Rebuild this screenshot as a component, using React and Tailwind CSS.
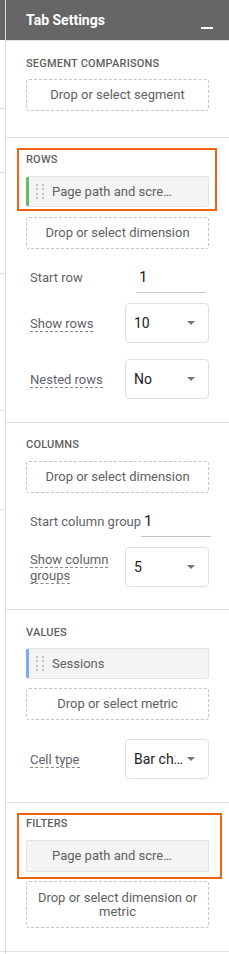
import React from 'react';

const font = "font-['Roboto','Liberation_Sans',sans-serif]";

function Label({ children }) {
  return (
    <div className="h-4 text-[11px] leading-4 font-medium tracking-[0.2px] text-[#5f5f5f] uppercase">
      {children}
    </div>
  );
}

function DropBox({ children, className = '' }) {
  return (
    <div className={`h-[32px] border border-dashed border-[#c4c4c4] rounded-[3px] flex items-center justify-center text-[13px] text-[#616161] ${className}`}>
      {children}
    </div>
  );
}

function Dots() {
  return (
    <div className="grid grid-cols-2 gap-x-[4px] gap-y-[2.5px] ml-[7px] mr-[8px]">
      {Array.from({ length: 8 }).map((_, i) => (
        <span key={i} className="w-[2px] h-[2px] bg-[#c2c2c2]" />
      ))}
    </div>
  );
}

function Chip({ children, bar }) {
  return (
    <div className="h-[31px] bg-[#f4f4f4] border border-l-0 border-[#e3e3e3] rounded-[2px] flex items-center overflow-hidden">
      <div className={`w-[3px] self-stretch ${bar}`} />
      <Dots />
      <span className="text-[13px] text-[#616161] truncate">{children}</span>
    </div>
  );
}

function Select({ value }) {
  return (
    <div className="ml-auto w-[84px] h-[40px] border border-[#e0e0e0] rounded-[4px] flex items-center pl-[8px] pr-[13px]">
      <span className="text-[14px] text-[#212121]">{value}</span>
      <span className="ml-auto w-0 h-0 border-l-[4px] border-r-[4px] border-t-[4px] border-l-transparent border-r-transparent border-t-[#757575]" />
    </div>
  );
}

function DashLabel({ children }) {
  return (
    <span className="text-[13px] leading-[15px] text-[#5f6368] border-b border-dashed border-[#8a8a8a]">
      {children}
    </span>
  );
}

function SelectRow({ label, value, className = '' }) {
  return (
    <div className={`flex items-center pl-[4px] ${className}`}>
      <div className="w-[88px] leading-[15px]">
        <DashLabel>{label}</DashLabel>
      </div>
      <Select value={value} />
    </div>
  );
}

function InputRow({ label, value, className = '' }) {
  return (
    <div className={`flex items-center h-[30px] pl-[4px] ${className}`}>
      <span className="text-[13px] text-[#5f6368] whitespace-nowrap">{label}</span>
      <div className="ml-auto mr-[3px] w-[70px] shrink-0 h-[30px] border-b border-[#c8c8c8] flex items-center pl-[3px] text-[15px] text-[#212121]">
        {value}
      </div>
    </div>
  );
}

export default function App() {
  return (
    <div className={`flex w-[229px] h-[954px] bg-white ${font}`}>
      {/* partly hidden page behind the panel */}
      <div className="w-[5px] shrink-0 flex flex-col">
        <div className="h-[40px] bg-[#666666]" />
        <div className="h-[69px] border-b border-[#e0e0e0]" />
        <div className="h-[64px] border-b border-[#e0e0e0]" />
        <div className="h-[101px] border-b border-[#e0e0e0]" />
        <div className="h-[137px] border-b border-[#e0e0e0]" />
        <div className="h-[99px] border-b border-[#e0e0e0]" />
        <div className="flex-1 border-b border-[#e0e0e0] mb-[2px]" />
      </div>

      <div className="w-[224px] shrink-0 flex flex-col border-l border-[#dedede]">
        {/* Header */}
        <div className="h-[41px] bg-[#666666] border-b border-[#e0e0e0] flex items-center pl-[20px] relative">
          <span className="text-[14px] font-bold text-white">Tab Settings</span>
          <span className="absolute right-[16px] top-[27px] w-[12px] h-[2px] bg-white" />
        </div>

        {/* Segment comparisons */}
        <div className="px-[20px] pt-[15px] pb-[26px] border-b border-[#e0e0e0]">
          <Label>Segment Comparisons</Label>
          <DropBox className="mt-[7px]">Drop or select segment</DropBox>
        </div>

        {/* Rows */}
        <div className="px-[20px] pt-[10px] pb-[23px] border-b border-[#e0e0e0]">
          <div className="-ml-[9px] -mr-[8px] border-2 border-[#f5620f] pl-[7px] pr-[6px] pt-[2px] pb-[2px]">
            <Label>Rows</Label>
            <div className="mt-[8px]">
              <Chip bar="bg-[#66bb6a]">Page path and scre…</Chip>
            </div>
          </div>
          <DropBox className="mt-[6px]">Drop or select dimension</DropBox>
          <InputRow label="Start row" value="1" className="mt-[14px]" />
          <SelectRow label="Show rows" value="10" className="mt-[10px]" />
          <SelectRow label="Nested rows" value="No" className="mt-[16px]" />
        </div>

        {/* Columns */}
        <div className="px-[20px] pt-[14px] pb-[22px] border-b border-[#e0e0e0]">
          <Label>Columns</Label>
          <DropBox className="mt-[8px]">Drop or select dimension</DropBox>
          <InputRow label="Start column group" value="1" className="mt-[14px]" />
          <div className="flex items-center pl-[4px] mt-[10px]">
            <div className="w-[88px] leading-[15px]">
              <DashLabel>Show column groups</DashLabel>
            </div>
            <Select value="5" />
          </div>
        </div>

        {/* Values */}
        <div className="px-[20px] pt-[15px] pb-[23px] border-b border-[#e0e0e0]">
          <Label>Values</Label>
          <div className="mt-[7px]">
            <Chip bar="bg-[#7baaf7]">Sessions</Chip>
          </div>
          <DropBox className="mt-[9px]">Drop or select metric</DropBox>
          <SelectRow label="Cell type" value="Bar ch…" className="mt-[19px]" />
        </div>

        {/* Filters */}
        <div className="flex-1 px-[20px] pt-[10px] border-b border-[#e0e0e0] mb-[2px]">
          <div className="-ml-[9px] -mr-[13px] border-2 border-[#f5620f] pl-[7px] pr-[11px] pt-[1px] pb-[5px]">
            <Label>Filters</Label>
            <div className="mt-[8px] h-[32px] bg-[#f4f4f4] border border-[#e3e3e3] rounded-[2px] flex items-center pl-[25px]">
              <span className="text-[13px] text-[#616161]">Page path and scre…</span>
            </div>
          </div>
          <div className="mt-[2px] h-[47px] border border-dashed border-[#c4c4c4] rounded-[3px] flex items-center justify-center text-center text-[13px] leading-[14px] text-[#616161] px-[4px]">
            Drop or select dimension or metric
          </div>
        </div>
      </div>
    </div>
  );
}
